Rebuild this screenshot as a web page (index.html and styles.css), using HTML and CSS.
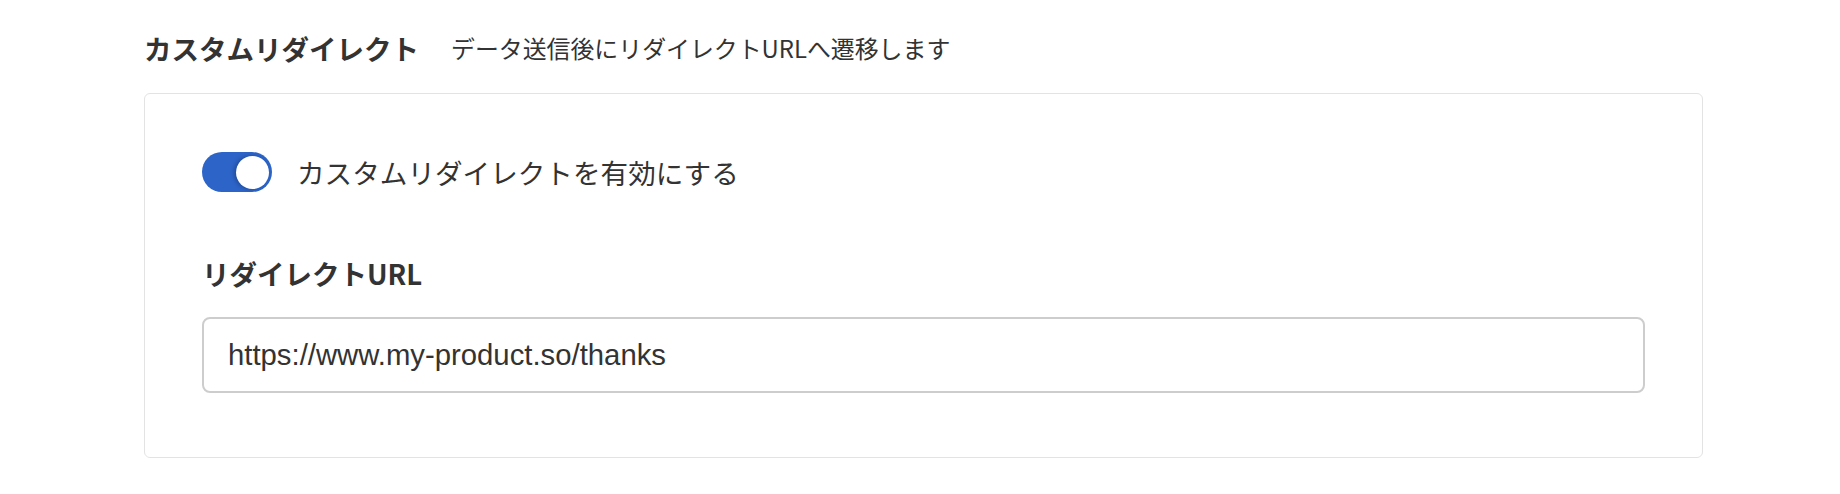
FILE: index.html
```html
<!DOCTYPE html>
<html lang="ja">
<head>
<meta charset="utf-8">
<title>カスタムリダイレクト</title>
<link rel="stylesheet" href="styles.css">
</head>
<body>
<section class="section">
  <header class="section-header">
    <h2 class="section-title">カスタムリダイレクト</h2>
    <p class="section-desc">データ送信後にリダイレクトURLへ遷移します</p>
  </header>
  <div class="card">
    <label class="toggle-row">
      <span class="toggle on"><span class="knob"></span></span>
      <span class="toggle-label">カスタムリダイレクトを有効にする</span>
    </label>
    <div class="field">
      <div class="field-label">リダイレクトURL</div>
      <div class="input">https://www.my-product.so/thanks</div>
    </div>
  </div>
</section>
</body>
</html>
```

FILE: styles.css
```css
html, body {
  margin: 0;
  padding: 0;
  background: #ffffff;
}
body {
  font-family: "Noto Sans CJK JP", "Noto Sans", sans-serif;
  color: #333333;
}
.section {
  padding: 28px 0 0 144px;
  width: 1559px;
}
.section-header {
  display: flex;
  align-items: center;
  height: 40px;
  gap: 32px;
  margin-bottom: 25px;
}
.section-title {
  margin: 0;
  font-size: 27.5px;
  font-weight: 700;
  line-height: 40px;
  color: #333333;
}
.section-desc {
  margin: 0;
  font-size: 23.9px;
  line-height: 40px;
  color: #333333;
}
.card {
  border: 1px solid #e3e3e3;
  border-radius: 6px;
  padding: 58px 57px 64px 57px;
  display: flex;
  flex-direction: column;
  gap: 61px;
}
.toggle-row {
  display: flex;
  align-items: center;
  gap: 25px;
  height: 40px;
}
.toggle {
  width: 70px;
  height: 40px;
  border-radius: 20px;
  background: #2c64c8;
  display: flex;
  align-items: center;
  justify-content: flex-end;
  padding: 0 3px;
  box-sizing: border-box;
  flex: none;
}
.knob {
  width: 33px;
  height: 33px;
  border-radius: 50%;
  background: #ffffff;
  box-shadow: -2px 0 4px rgba(0, 0, 0, 0.25);
}
.toggle-label {
  font-size: 27.6px;
  line-height: 40px;
  color: #333333;
}
.field {
  display: flex;
  flex-direction: column;
  gap: 24px;
}
.field-label {
  font-size: 27.5px;
  font-weight: 700;
  line-height: 40px;
  color: #333333;
}
.input {
  height: 76px;
  box-sizing: border-box;
  border: 2px solid #cdcdcd;
  border-radius: 8px;
  padding: 0 24px;
  display: flex;
  align-items: center;
  font-family: "Liberation Sans", Arial, sans-serif;
  font-size: 29.3px;
  color: #333333;
}
```
